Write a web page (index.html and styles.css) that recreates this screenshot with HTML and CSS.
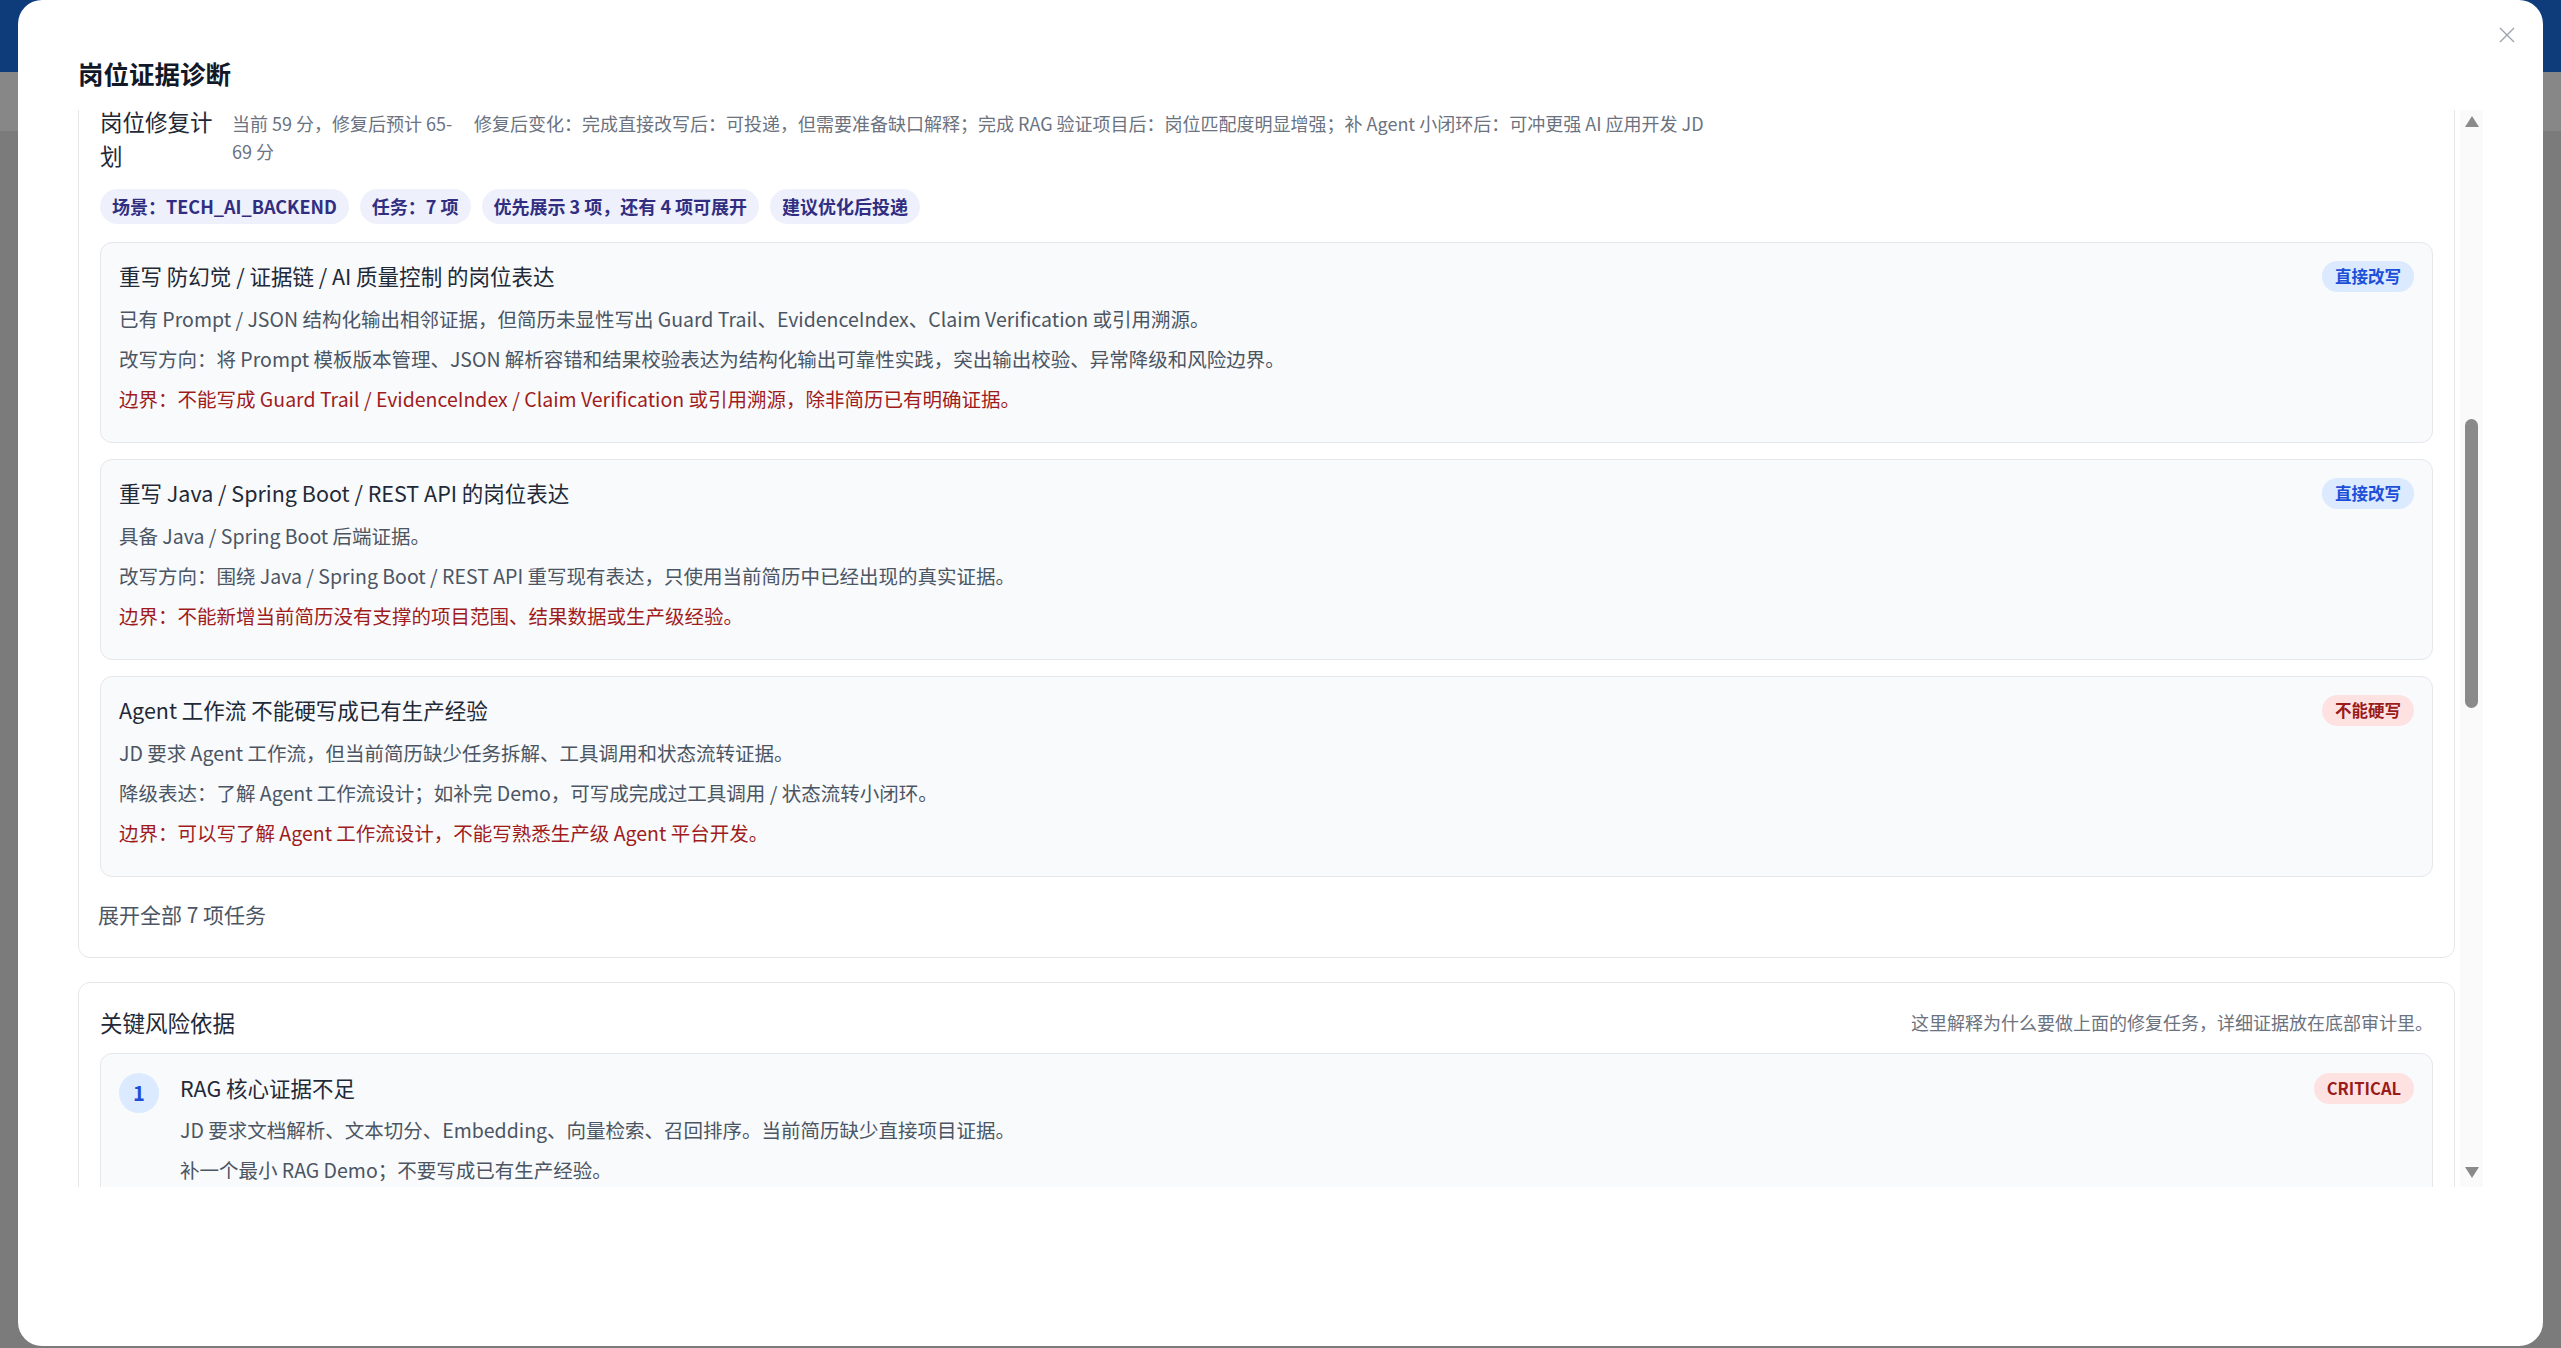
FILE: index.html
```html
<!DOCTYPE html>
<html lang="zh-CN">
<head>
  <meta charset="utf-8">
  <title>岗位证据诊断</title>
  <link rel="stylesheet" href="styles.css">
</head>
<body>
  <div class="page">
    <div class="page-header"></div>
    <div class="page-nav"></div>
  </div>

  <div class="modal">
    <button class="modal-close" aria-label="关闭">
      <svg width="16" height="16" viewBox="0 0 16 16"><path d="M1 1 L15 15 M15 1 L1 15" stroke="#9ca3af" stroke-width="1.4" fill="none"/></svg>
    </button>
    <h1 class="modal-title">岗位证据诊断</h1>

    <div class="scroll">
      <div class="scroll-content">
        <div class="scroll-inner">

          <section class="card plan">
            <div class="plan-head">
              <div class="plan-label">岗位修复计划</div>
              <div class="plan-score">当前 59 分，修复后预计 65-<wbr>69 分</div>
              <div class="plan-change">修复后变化：完成直接改写后：可投递，但需要准备缺口解释；完成 RAG 验证项目后：岗位匹配度明显增强；补 Agent 小闭环后：可冲更强 AI 应用开发 JD</div>
            </div>

            <div class="tags">
              <span class="tag">场景：TECH_AI_BACKEND</span>
              <span class="tag">任务：7 项</span>
              <span class="tag">优先展示 3 项，还有 4 项可展开</span>
              <span class="tag">建议优化后投递</span>
            </div>

            <div class="tasks">
              <article class="task">
                <div class="task-head">
                  <h3 class="task-title">重写 防幻觉 / 证据链 / AI 质量控制 的岗位表达</h3>
                  <span class="badge badge-blue">直接改写</span>
                </div>
                <p>已有 Prompt / JSON 结构化输出相邻证据，但简历未显性写出 Guard Trail、EvidenceIndex、Claim Verification 或引用溯源。</p>
                <p>改写方向：将 Prompt 模板版本管理、JSON 解析容错和结果校验表达为结构化输出可靠性实践，突出输出校验、异常降级和风险边界。</p>
                <p class="limit">边界：不能写成 Guard Trail / EvidenceIndex / Claim Verification 或引用溯源，除非简历已有明确证据。</p>
              </article>

              <article class="task">
                <div class="task-head">
                  <h3 class="task-title">重写 Java / Spring Boot / REST API 的岗位表达</h3>
                  <span class="badge badge-blue">直接改写</span>
                </div>
                <p>具备 Java / Spring Boot 后端证据。</p>
                <p>改写方向：围绕 Java / Spring Boot / REST API 重写现有表达，只使用当前简历中已经出现的真实证据。</p>
                <p class="limit">边界：不能新增当前简历没有支撑的项目范围、结果数据或生产级经验。</p>
              </article>

              <article class="task">
                <div class="task-head">
                  <h3 class="task-title">Agent 工作流 不能硬写成已有生产经验</h3>
                  <span class="badge badge-red">不能硬写</span>
                </div>
                <p>JD 要求 Agent 工作流，但当前简历缺少任务拆解、工具调用和状态流转证据。</p>
                <p>降级表达：了解 Agent 工作流设计；如补完 Demo，可写成完成过工具调用 / 状态流转小闭环。</p>
                <p class="limit">边界：可以写了解 Agent 工作流设计，不能写熟悉生产级 Agent 平台开发。</p>
              </article>
            </div>

            <button class="expand">展开全部 7 项任务</button>
          </section>

          <section class="card risk">
            <div class="risk-head">
              <h2 class="risk-title">关键风险依据</h2>
              <span class="risk-note">这里解释为什么要做上面的修复任务，详细证据放在底部审计里。</span>
            </div>
            <article class="risk-item">
              <span class="risk-num">1</span>
              <div class="risk-body">
                <h3 class="task-title">RAG 核心证据不足</h3>
                <p>JD 要求文档解析、文本切分、Embedding、向量检索、召回排序。当前简历缺少直接项目证据。</p>
                <p>补一个最小 RAG Demo；不要写成已有生产经验。</p>
              </div>
              <span class="badge badge-red">CRITICAL</span>
            </article>
          </section>

        </div>
      </div>

      <div class="scrollbar">
        <span class="sb-up"></span>
        <span class="sb-thumb" style="margin-top: 292px; height: 289px;"></span>
        <span class="sb-down"></span>
      </div>
    </div>
  </div>
</body>
</html>
```

FILE: styles.css
```css
html,
body {
  margin: 0;
  height: 100%;
}

body {
  font-family: "Noto Sans CJK SC", "Noto Sans", sans-serif;
  background-color: #7b7b7b;
  overflow: hidden;
  color: #1f2937;
}

h1, h2, h3, p {
  margin: 0;
  font-weight: normal;
}

/* page behind the overlay */
.page-header {
  height: 72px;
  background-color: #0e3c7b;
}

.page-nav {
  height: 59px;
  background-color: #878787;
}

/* modal */
.modal {
  position: absolute;
  top: 0;
  left: 18px;
  width: 2525px;
  height: 1346px;
  box-sizing: border-box;
  padding: 57px 60px 0 60px;
  background-color: white;
  border-radius: 24px;
}

.modal-close {
  position: absolute;
  top: 27px;
  right: 28px;
  padding: 0;
  border: none;
  background: none;
  line-height: 0;
  cursor: pointer;
}

.modal-title {
  font-size: 25.5px;
  font-weight: bold;
  line-height: 32px;
  color: #111827;
  margin-bottom: 21px;
}

.scroll {
  display: flex;
  gap: 5px;
  height: 1077px;
}

.scroll-content {
  flex: 1;
  overflow: hidden;
}

.scroll-inner {
  display: flex;
  flex-direction: column;
  gap: 24px;
  margin-top: -27px;
}

/* fake scrollbar */
.scrollbar {
  width: 23px;
  display: flex;
  flex-direction: column;
  align-items: center;
  background-color: #fafafa;
}

.sb-up {
  margin-top: 6px;
  width: 0;
  height: 0;
  border-left: 7.5px solid transparent;
  border-right: 7.5px solid transparent;
  border-bottom: 11px solid #8a8a8a;
}

.sb-thumb {
  width: 13px;
  border-radius: 7px;
  background-color: #8a8a8a;
}

.sb-down {
  margin-top: auto;
  margin-bottom: 9px;
  width: 0;
  height: 0;
  border-left: 7.5px solid transparent;
  border-right: 7.5px solid transparent;
  border-top: 11px solid #8a8a8a;
}

/* cards */
.card {
  border: 1px solid #e5e7eb;
  border-radius: 12px;
  background-color: white;
}

.plan {
  padding: 20px 21px 28px;
}

.plan-head {
  display: flex;
  align-items: flex-start;
}

.plan-label {
  width: 116px;
  flex-shrink: 0;
  font-size: 22.5px;
  line-height: 34px;
  color: #1f2937;
}

.plan-score {
  width: 225px;
  flex-shrink: 0;
  margin-left: 16px;
  padding-top: 5px;
  font-size: 18px;
  line-height: 28px;
  color: #6b7280;
}

.plan-change {
  flex: 1;
  margin-left: 17px;
  padding-top: 5px;
  font-size: 18px;
  line-height: 28px;
  color: #6b7280;
}

.tags {
  display: flex;
  gap: 11px;
  margin-top: 17px;
}

.tag {
  height: 35px;
  line-height: 35px;
  padding: 0 12px;
  border-radius: 18px;
  background-color: #eef0fc;
  color: #312e81;
  font-size: 18px;
  font-weight: bold;
}

.tasks {
  display: flex;
  flex-direction: column;
  gap: 16px;
  margin-top: 18px;
}

.task {
  padding: 18px 18px 28px;
  border: 1px solid #e5e7eb;
  border-radius: 12px;
  background-color: #f8fafc;
}

.task-head {
  display: flex;
  justify-content: space-between;
  align-items: flex-start;
}

.task-title {
  font-size: 21.5px;
  line-height: 30px;
  color: #1f2937;
}

.task p,
.risk-body p {
  margin-top: 10px;
  font-size: 19.5px;
  line-height: 30px;
  color: #4b5563;
}

.task .task-head + p,
.risk-body .task-title + p {
  margin-top: 12px;
}

.task p.limit {
  color: #a01c1c;
}

.badge {
  flex-shrink: 0;
  height: 31px;
  line-height: 31px;
  padding: 0 13px;
  border-radius: 16px;
  font-size: 16.5px;
  font-weight: bold;
}

.badge-blue {
  background-color: #dbeafe;
  color: #1d4ed8;
}

.badge-red {
  background-color: #fee2e2;
  color: #991b1b;
}

.expand {
  display: block;
  margin-top: 22px;
  margin-left: -2px;
  padding: 0;
  border: none;
  background: none;
  font-family: inherit;
  font-size: 21px;
  line-height: 30px;
  color: #4b5563;
  cursor: pointer;
}

/* risk card */
.risk {
  padding: 24px 21px 0;
}

.risk-head {
  display: flex;
  justify-content: space-between;
  align-items: center;
}

.risk-title {
  font-size: 22.5px;
  line-height: 30px;
  color: #1f2937;
}

.risk-note {
  font-size: 18px;
  color: #6b7280;
}

.risk-item {
  display: flex;
  align-items: flex-start;
  gap: 21px;
  margin-top: 16px;
  padding: 19px 18px 28px;
  border: 1px solid #e5e7eb;
  border-radius: 12px;
  background-color: #f8fafc;
}

.risk-num {
  width: 40px;
  height: 40px;
  flex-shrink: 0;
  border-radius: 50%;
  background-color: #dbeafe;
  color: #1d4ed8;
  font-size: 20px;
  font-weight: bold;
  line-height: 40px;
  text-align: center;
}

.risk-body {
  flex: 1;
}
```
